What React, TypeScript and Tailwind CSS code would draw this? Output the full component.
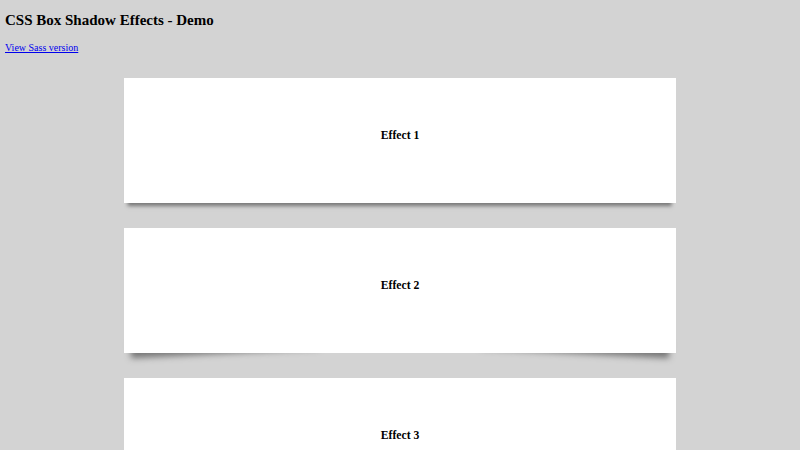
import React from "react";

function Box({ n, children }: { n: number; children?: React.ReactNode }) {
  return (
    <div
      className={
        "relative h-[125px] w-[552px] bg-white " +
        (n === 1 ? "shadow-[0_6.25px_3.75px_-3.75px_#777]" : "")
      }
    >
      {children}
      <h3 className="m-0 pt-[51px] text-center text-[11.7px] font-bold leading-[13.5px] text-black">
        Effect {n}
      </h3>
    </div>
  );
}

export default function App() {
  return (
    <div
      className="isolate flex min-h-screen flex-col bg-[#d3d3d3] px-[5px] pt-[12px] pb-[25px] text-black"
      style={{ fontFamily: '"Liberation Serif", "Times New Roman", serif' }}
    >
      <div className="flex flex-col gap-[12.45px]">
        <h2 className="m-0 text-[15px] font-bold leading-[17.25px]">CSS Box Shadow Effects - Demo</h2>
        <p className="m-0 text-[10px] leading-[11.5px]">
          <a href="#" className="text-[#0000ee] underline">
            View Sass version
          </a>
        </p>
      </div>
      <div className="mt-[25px] flex flex-col items-center gap-[25px]">
        <Box n={1} />
        <Box n={2}>
          <div className="absolute -z-10 top-[80%] bottom-[9.4px] left-[6.25px] w-1/2 max-w-[187.5px] -rotate-3 bg-[#777] shadow-[0_9.4px_6.25px_#777]" />
          <div className="absolute -z-10 top-[80%] bottom-[9.4px] right-[6.25px] w-1/2 max-w-[187.5px] rotate-3 bg-[#777] shadow-[0_9.4px_6.25px_#777]" />
        </Box>
        <Box n={3}>
          <div className="absolute -z-10 top-[80%] bottom-[9.4px] left-[6.25px] w-1/2 max-w-[187.5px] -rotate-3 bg-[#777] shadow-[0_9.4px_6.25px_#777]" />
        </Box>
      </div>
    </div>
  );
}
